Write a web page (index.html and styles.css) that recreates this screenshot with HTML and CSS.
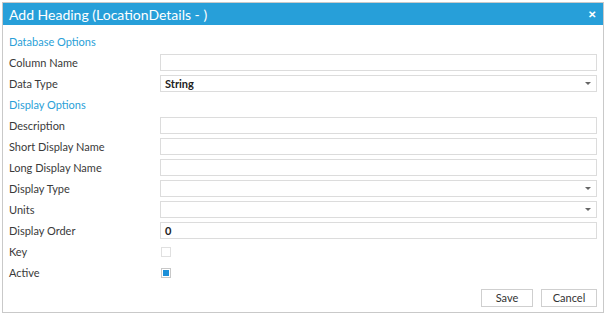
FILE: index.html
```html
<!DOCTYPE html>
<html lang="en">

<head>
    <meta charset="UTF-8">
    <meta name="viewport" content="width=device-width, initial-scale=1.0">
    <title>Add Heading</title>
    <link rel="stylesheet" href="styles.css">
</head>

<body>
    <div class="dialog">
        <div class="title">
            <span>Add Heading (LocationDetails - )</span>
            <span class="close">&#x2715;</span>
        </div>
        <div class="content">
            <div class="section">Database Options</div>
            <div class="row">
                <span>Column Name</span>
                <div class="field"></div>
            </div>
            <div class="row">
                <span>Data Type</span>
                <div class="field select"><b>String</b><i class="arrow"></i></div>
            </div>
            <div class="section">Display Options</div>
            <div class="row">
                <span>Description</span>
                <div class="field"></div>
            </div>
            <div class="row">
                <span>Short Display Name</span>
                <div class="field"></div>
            </div>
            <div class="row">
                <span>Long Display Name</span>
                <div class="field"></div>
            </div>
            <div class="row">
                <span>Display Type</span>
                <div class="field select"><i class="arrow"></i></div>
            </div>
            <div class="row">
                <span>Units</span>
                <div class="field select"><i class="arrow"></i></div>
            </div>
            <div class="row">
                <span>Display Order</span>
                <div class="field"><b>0</b></div>
            </div>
            <div class="row">
                <span>Key</span>
                <div><span class="check"></span></div>
            </div>
            <div class="row">
                <span>Active</span>
                <div><span class="check on"></span></div>
            </div>
        </div>
        <div class="footer">
            <a href="javascript:void(0)" class="btn save">Save</a>
            <a href="javascript:void(0)" class="btn cancel">Cancel</a>
        </div>
    </div>
</body>

</html>
```

FILE: styles.css
```css
* {
    padding: 0;
    margin: 0;
    box-sizing: border-box;
}

body {
    background-color: white;
    font-family: Lato, "Open Sans", sans-serif;
    font-size: 11px;
    color: #3a3a3a;
}

.dialog {
    margin: 2px 0 0 2px;
    width: 602px;
    height: 311px;
    border: 1px solid #c9c9c9;
    display: flex;
    flex-direction: column;
}

.title {
    height: 22px;
    background-color: #279fd9;
    color: white;
    font-size: 14px;
    padding: 0 7px 0 6px;
    display: flex;
    align-items: center;
    justify-content: space-between;
}

.title .close {
    font-size: 10px;
    font-weight: bold;
}

.content {
    padding: 6px 6px 0 6px;
}

.section {
    height: 21px;
    line-height: 21px;
    color: #2a9fd8;
}

.row {
    display: grid;
    grid-template-columns: 151px 1fr;
    height: 21px;
    align-items: center;
}

.field {
    position: relative;
    height: 17px;
    border: 1px solid #dcdcdc;
    padding-left: 4px;
    line-height: 15px;
    color: #222;
}

.field b {
    font-weight: bold;
}

.arrow {
    position: absolute;
    right: 5px;
    top: 6px;
    border-left: 3px solid transparent;
    border-right: 3px solid transparent;
    border-top: 3px solid #666;
}

.check {
    display: block;
    margin-left: 1px;
    width: 10px;
    height: 10px;
    border: 1px solid #e0e0e0;
}

.check.on {
    border-color: #c8c8c8;
    padding: 1px;
}

.check.on::after {
    content: "";
    display: block;
    width: 6px;
    height: 6px;
    background-color: #1b8fd8;
}

.footer {
    margin-top: auto;
    padding: 0 6px 5px 0;
    display: flex;
    justify-content: flex-end;
    gap: 8px;
}

.btn {
    height: 18px;
    line-height: 16px;
    border: 1px solid #cfcfcf;
    background-color: white;
    text-align: center;
    color: #333;
    text-decoration: none;
}

.save {
    width: 52px;
}

.cancel {
    width: 56px;
}
```
